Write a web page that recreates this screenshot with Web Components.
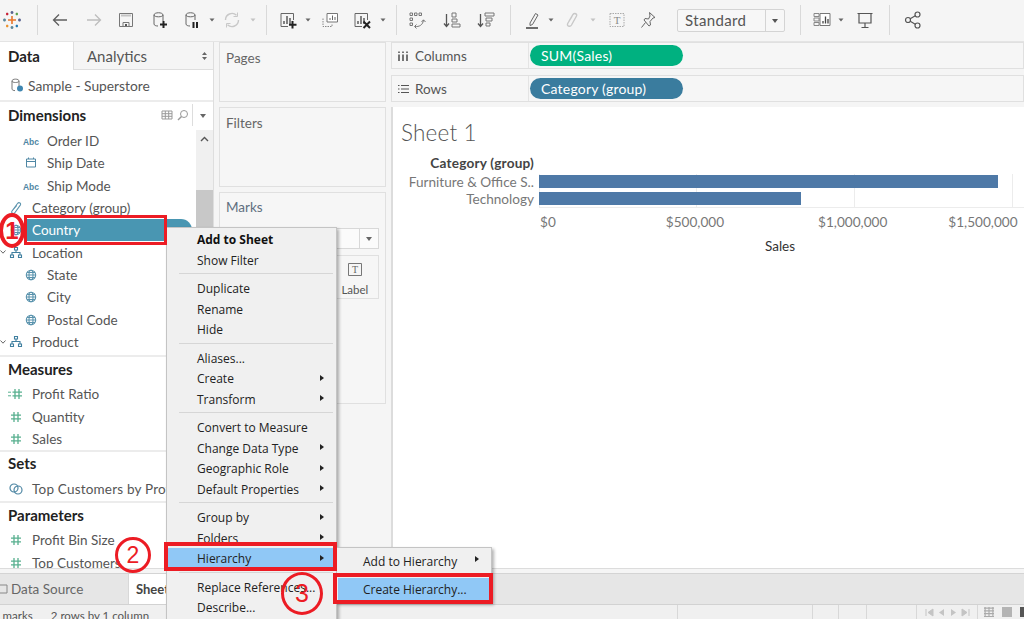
<!DOCTYPE html>
<html>
<head>
<meta charset="utf-8">
<title>Tableau</title>
<style>
  html, body { margin: 0; padding: 0; background: #fff; }
</style>
</head>
<body>
<tableau-app></tableau-app>
<script>
const ICONS = {
  logo: `<g stroke-width="1.6" fill="none">
    <path d="M10 6v8M6 10h8" stroke="#e8762b"/><path d="M10 1v3M8.6 2.5h2.8" stroke="#5b6591"/>
    <path d="M10 16v3M8.6 17.5h2.8" stroke="#5b879b"/><path d="M1 10h3M2.5 8.6v2.8" stroke="#59879b"/>
    <path d="M16 10h3M17.5 8.6v2.8" stroke="#5b6591"/><path d="M4 4h2.4M5.2 2.8v2.4" stroke="#c72035"/>
    <path d="M13.6 4H16M14.8 2.8v2.4" stroke="#59a14f"/><path d="M4 16h2.4M5.2 14.8v2.4" stroke="#eb912b"/>
    <path d="M13.6 16H16M14.8 14.8v2.4" stroke="#1f77b4"/></g>`,
  back: `<path d="M17 10H3.5M9 4.5 3.5 10 9 15.5" fill="none" stroke="#5f5f5f" stroke-width="1.3"/>`,
  forward: `<path d="M3 10h13.5M11 4.5l5.5 5.5-5.5 5.5" fill="none" stroke="#bdbdbd" stroke-width="1.3"/>`,
  save: `<path d="M3.5 3.5h13v13h-13z" fill="none" stroke="#777"/><path d="M5 5.5h10" stroke="#c4c4c4" stroke-width="2"/><path d="M7 16v-3.5h6V16" fill="none" stroke="#777"/><path d="M9 14h2v2H9z" fill="#555"/>`,
  dbadd: `<path d="M5 5c0-3 9-3 9 0v6M5 5c0 2.4 9 2.4 9 0M5 5v9c0 1.400 2 2 4 2" fill="none" stroke="#666"/><path d="M14.500 11v7M11 14.500h7" stroke="#222" stroke-width="2"/>`,
  dbpause: `<path d="M4 5c0-3 9-3 9 0v5M4 5c0 2.400 9 2.400 9 0M4 5v9c0 1.400 2 2 4 2" fill="none" stroke="#666"/><path d="M11.500 12v6M15 12v6" stroke="#222" stroke-width="2"/>`,
  refresh: `<path d="M3.500 10a6.500 6.500 0 0 1 11-4.700M16.500 10a6.500 6.500 0 0 1-11 4.700" fill="none" stroke="#c8c8c8" stroke-width="1.400"/><path d="M15.500 2.500v4h-4M4.500 17.500v-4h4" fill="none" stroke="#c8c8c8"/>`,
  sheetadd: `<path d="M3 16.500V3.500h12.500V10M3 16.500h7" fill="none" stroke="#666"/><path d="M6 14v-3M9 14V6M12 14V8" stroke="#444" stroke-width="1.300"/><path d="M14.500 11v7.500M11 14.700h7.500" stroke="#222" stroke-width="2"/>`,
  sheetdup: `<path d="M7 12V3.500h10.500V12H7z" fill="#fff" stroke="#777"/><path d="M10 10V8M12.500 10V5.500M15 10V7" stroke="#666"/><path d="M3 8.500V16.500h9v-2.500" fill="none" stroke="#888" stroke-dasharray="1.500 1"/>`,
  sheetclear: `<path d="M3 16.500V3.500h12.500V10M3 16.500h7" fill="none" stroke="#666"/><path d="M6 14v-3M9 14V6M12 14V8" stroke="#444" stroke-width="1.300"/><path d="M11.500 11.500l6.500 6.500M18 11.500 11.500 18" stroke="#222" stroke-width="2"/>`,
  swap: `<g fill="none" stroke="#777"><path d="M3 3h2.500v2.500H3zM7.500 3H10v2.500H7.500zM12 3h2.500v2.500H12zM3 8h2.500v2.500H3zM3 13h2.500v2.500H3z"/><path d="M8 16.500c4 .5 8-1.500 8.500-6.500"/><path d="M14.500 12l2-2.200 2 2.200M9.500 14.500 7.500 16.500l2 2"/></g>`,
  sortasc: `<path d="M4.500 4v12M2 13.500l2.500 3 2.500-3" fill="none" stroke="#555" stroke-width="1.300"/><path d="M10 3h4v4h-4zM10 9h5v3h-5zM10 14h8v3h-8z" fill="none" stroke="#777"/>`,
  sortdesc: `<path d="M4.500 4v12M2 13.500l2.500 3 2.500-3" fill="none" stroke="#555" stroke-width="1.300"/><path d="M9 3h9v3H9zM10 8h6v3h-6zM10 13h4v3h-4z" fill="none" stroke="#777"/>`,
  highlight: `<path d="M7 13 12.500 3.500l2.500 1.500L9.500 14.500 7 15.500z" fill="none" stroke="#666"/><path d="M3 18h12" stroke="#333" stroke-width="1.400"/>`,
  clip: `<path d="M6.500 12 11 4.500c1.500-2 4.500-.5 3.500 1.500L9.500 15c-1.500 2.500-5 1-3.800-1.500L10 6.500" fill="none" stroke="#c8c8c8" stroke-width="1.400"/>`,
  textbox: `<path d="M3 3.500h14v13H3z" fill="none" stroke="#aaa" stroke-dasharray="1.500 1"/><text x="10" y="14" text-anchor="middle" font-family="Liberation Serif, serif" font-size="11" fill="#888">T</text>`,
  pin: `<path d="M11.500 2.500l5.500 5-2 .5-3 3.500.5 3.500-1.500 1L6 10l1-1.500 3.500.5L12 6z" fill="none" stroke="#666"/><path d="M7.500 12.500 3.500 17.500" stroke="#666"/>`,
  showme: `<path d="M2 3.500h5v3H2zM2 8h5v3H2zM2 12.500h5v3H2z" fill="none" stroke="#888"/><path d="M8 3.500h10v12H8z" fill="#fff" stroke="#777"/><path d="M11 13.500v-2.500M13.500 13.500V6.500M16 13.500V9" stroke="#444" stroke-width="1.300"/>`,
  present: `<path d="M2.500 3.500h15M4 3.500v9.500h12V3.500M10 13v4M6.500 17.500h7" fill="none" stroke="#555" stroke-width="1.200"/>`,
  share: `<g fill="none" stroke="#555" stroke-width="1.200"><circle cx="5" cy="10" r="2.500"/><circle cx="14.500" cy="4.500" r="2.500"/><circle cx="14.500" cy="15.500" r="2.500"/><path d="M7.200 8.800 12.300 5.800M7.200 11.200l5.100 3"/></g>`,
  caret: `<path d="M7.500 8.500h5L10 11.500z" fill="#666"/>`,
  caretoff: `<path d="M7.500 8.500h5L10 11.500z" fill="#c4c4c4"/>`
};

const FIELD_ICONS = {
  abc: `<text x="9" y="12.500" text-anchor="middle" font-family="Liberation Sans, sans-serif" font-size="8.500" font-weight="700" fill="#4f87a4">Abc</text>`,
  date: `<path d="M4.500 5h9v8h-9zM4.500 7.500h9M6.500 3.500V5M11.500 3.500V5" fill="none" stroke="#4f87a4"/>`,
  globe: `<g fill="none" stroke="#5a93ad" stroke-width="1.100"><circle cx="9" cy="9" r="4.700"/><ellipse cx="9" cy="9" rx="2" ry="4.700"/><path d="M4.300 9h9.400M5 6.500h8M5 11.500h8"/></g>`,
  tree: `<g fill="none" stroke="#3f7f9f" stroke-width="1.100"><path d="M7.500 3.500h3v2.500h-3zM3.500 11h3v2.500h-3zM11.500 11h3v2.500h-3zM9 6v2.500M5 11V8.500h8V11"/></g>`,
  clip: `<path d="M5 12 10.500 4.500c1.500-1.800 4-.2 2.800 1.600L8 13.500c-1.400 1.900-4.300.6-3-1.500L9.800 6.500" fill="none" stroke="#5a93ad" stroke-width="1.100"/>`,
  num: `<path d="M7 4v10M11 4v10M4 7.200h10M4 10.800h10" fill="none" stroke="#58b08f" stroke-width="1.300"/>`,
  calc: `<path d="M8 4v10M12 4v10M5.500 7.200h9.500M5.500 10.800h9.500" fill="none" stroke="#58b08f" stroke-width="1.300"/><path d="M1 7.200h3M1 10.800h3" stroke="#58b08f"/>`,
  set: `<g fill="none" stroke="#4f87a4" stroke-width="1.200"><circle cx="7" cy="8" r="4"/><circle cx="11" cy="10" r="4"/></g>`
};

// small helper: one class per element, template string in the class
function define(name, css, html) {
  class El extends HTMLElement {
    connectedCallback() {
      if (this.shadowRoot) return;
      const root = this.attachShadow({ mode: 'open' });
      root.innerHTML = `<style>${css}</style>${typeof html === 'function' ? html(this) : html}`;
    }
  }
  customElements.define(name, El);
}

define('tool-icon', `
  :host { display: flex; align-items: center; justify-content: center; height: 40px; flex: none; }
  svg { width: 20px; height: 20px; display: block; overflow: visible; }
`, el => `<svg viewBox="0 0 20 20">${ICONS[el.getAttribute('name')]}</svg>`);

define('tool-sep', `
  :host { display: block; width: 1px; height: 30px; background: #d9d9d9; flex: none; }
`, '');

define('view-select', `
  :host { display: flex; flex: none; width: 108px; height: 23px; box-sizing: border-box; border: 1px solid #d4d4d4; border-radius: 2px; background: #f7f7f7; align-items: center; font: 15px Lato, sans-serif; color: #555; letter-spacing: .35px; }
  span { flex: 1; padding-left: 7px; }
  i { width: 18px; height: 100%; border-left: 1px solid #d4d4d4; display: flex; align-items: center; justify-content: center; }
  i::after { content: ""; border: 3px solid transparent; border-top: 4px solid #555; margin-top: 4px; }
`, `<span><slot></slot></span><i></i>`);

define('tool-bar', `
  :host { display: flex; align-items: center; height: 42px; flex: none; background: #f5f5f5; border-bottom: 1px solid #e4e4e4; box-sizing: border-box; overflow: hidden; padding-bottom: 1px; }
`, `
  <tool-icon name="logo" style="width:24px"></tool-icon>
  <tool-sep style="margin-left:13px"></tool-sep>
  <tool-icon name="back" style="width:34px;margin-left:5px"></tool-icon>
  <tool-icon name="forward" style="width:34px"></tool-icon>
  <tool-icon name="save" style="width:30px"></tool-icon>
  <tool-icon name="dbadd" style="width:36px"></tool-icon>
  <tool-icon name="dbpause" style="width:30px"></tool-icon>
  <tool-icon name="caret" style="width:10px"></tool-icon>
  <tool-icon name="refresh" style="width:30px"></tool-icon>
  <tool-icon name="caretoff" style="width:12px"></tool-icon>
  <tool-sep style="margin-left:7px"></tool-sep>
  <tool-icon name="sheetadd" style="width:30px;margin-left:6px"></tool-icon>
  <tool-icon name="caret" style="width:10px"></tool-icon>
  <tool-icon name="sheetdup" style="width:34px"></tool-icon>
  <tool-icon name="sheetclear" style="width:30px"></tool-icon>
  <tool-icon name="caret" style="width:12px"></tool-icon>
  <tool-sep style="margin-left:7px"></tool-sep>
  <tool-icon name="swap" style="width:40px"></tool-icon>
  <tool-icon name="sortasc" style="width:30px"></tool-icon>
  <tool-icon name="sortdesc" style="width:38px"></tool-icon>
  <tool-sep style="margin-left:5px"></tool-sep>
  <tool-icon name="highlight" style="width:26px;margin-left:9px"></tool-icon>
  <tool-icon name="caret" style="width:10px"></tool-icon>
  <tool-icon name="clip" style="width:32px"></tool-icon>
  <tool-icon name="caretoff" style="width:10px"></tool-icon>
  <tool-icon name="textbox" style="width:38px"></tool-icon>
  <tool-icon name="pin" style="width:24px"></tool-icon>
  <view-select style="margin-left:17px">Standard</view-select>
  <tool-sep style="margin-left:15px"></tool-sep>
  <tool-icon name="showme" style="width:28px;margin-left:7px"></tool-icon>
  <tool-icon name="caret" style="width:10px"></tool-icon>
  <tool-icon name="present" style="width:38px"></tool-icon>
  <tool-sep style="margin-left:5px"></tool-sep>
  <tool-icon name="share" style="width:46px"></tool-icon>
`);

define('field-row', `
  :host { display: flex; align-items: center; height: 22.3px; font: 13.500px Lato, sans-serif; color: #555; white-space: nowrap; position: relative; flex: none; }
  .ic { width: 18px; height: 18px; flex: none; overflow: visible; }
  .chev { position: absolute; left: 0; top: 9px; width: 6px; height: 4px; fill: none; stroke: #666; }
  :host([level="1"]) { padding-left: 22px; }
  :host([level="0"]) { padding-left: 7px; }
  .lb { margin-left: 7px; }
  :host([selected]) .lb { background: #4996b2; color: #fff; border-radius: 0 11px 11px 0; height: 22px; line-height: 22px; margin-left: -1px; padding-left: 8px; width: 160px; }
`, el => `
  ${el.hasAttribute('open') ? '<svg class="chev" viewBox="0 0 6 4"><path d="M.5.5 3 3.200 5.500.5"/></svg>' : ''}
  <svg class="ic" viewBox="0 0 18 18">${FIELD_ICONS[el.getAttribute('icon')]}</svg>
  <span class="lb"><slot></slot></span>`);

define('pane-section', `
  :host { display: flex; flex-direction: column; border-bottom: 2px solid #ececec; box-sizing: border-box; flex: none; }
  h3 { margin: 0; height: var(--head, 26px); padding-left: 8px; font: 700 15px/calc(var(--head, 26px) - 2px) Lato, sans-serif; color: #222; }
`, el => `<h3>${el.getAttribute('title')}</h3><slot></slot>`);

define('data-pane', `
  :host { display: flex; flex-direction: column; width: 214px; flex: none; background: #fff; border-right: 1px solid #dedede; box-sizing: border-box; overflow: hidden; font-family: Lato, sans-serif; }
  .tabs { display: flex; height: 28px; flex: none; }
  .tabs b { width: 73px; padding-left: 8px; box-sizing: border-box; font: 700 15px/28px Lato, sans-serif; color: #222; }
  .tabs div { flex: 1; background: #f5f5f5; border-left: 1px solid #dedede; border-bottom: 1px solid #dedede; font: 15px/28px Lato, sans-serif; color: #555; padding-left: 13px; display: flex; justify-content: space-between; padding-right: 6px; }
  .tabs svg { width: 5px; height: 8px; align-self: center; }
  .src { height: 32px; flex: none; display: flex; align-items: center; border-bottom: 2px solid #ececec; box-sizing: border-box; font: 13.800px Lato, sans-serif; color: #555; padding-left: 10px; gap: 4px; }
  .src svg { width: 14px; height: 16px; }
  .dimhead { display: flex; align-items: center; height: 28px; padding-bottom: 2px; box-sizing: border-box; flex: none; font: 700 15px Lato, sans-serif; color: #222; padding-left: 8px; }
  .dimhead span { flex: 1; }
  .dimhead svg { width: 14px; height: 14px; margin-right: 2px; }
  .dimhead .drop { width: 20px; height: 22px; border-left: 1px solid #ddd; margin: 0 0 0 2px; display: flex; align-items: center; justify-content: center; }
  .dimhead .drop::after { content: ""; border: 3px solid transparent; border-top: 4px solid #666; margin-top: 4px; }
  .scrollwrap { flex: 1; display: flex; min-height: 0; }
  .list { width: 196px; flex: none; overflow: hidden; }
  .bar { width: 17px; flex: none; background: #f0f0f0; display: flex; flex-direction: column; }
  .bar .up { height: 60px; display: flex; justify-content: center; padding-top: 6px; box-sizing: border-box; }
  .bar .up svg { width: 9px; height: 6px; }
  .bar .thumb { height: 300px; background: #c8c8c8; }
  .dims { padding-bottom: 2px; border-bottom: 2px solid #ececec; }
  pane-section field-row { height: 22.500px; }
`, `
  <div class="tabs"><b>Data</b><div>Analytics<svg viewBox="0 0 5 8"><path d="M2.500 0 5 3H0zM0 5h5L2.500 8z" fill="#666"/></svg></div></div>
  <div class="src">
    <svg viewBox="0 0 14 16"><path d="M2 4c0-2.500 7-2.500 7 0v5M2 4c0 2 7 2 7 0M2 4v8c0 1 1.500 1.600 3 1.600" fill="none" stroke="#777"/><circle cx="10" cy="11.500" r="3" fill="#3f86b0"/></svg>
    <span>Sample - Superstore</span>
  </div>
  <div class="dimhead"><span>Dimensions</span>
    <svg viewBox="0 0 14 14"><path d="M2 3h10v8H2zM2 5.700h10M2 8.300h10M5.300 3v8M8.700 3v8" fill="none" stroke="#999"/></svg>
    <svg viewBox="0 0 14 14" style="margin:0"><circle cx="8" cy="6" r="3.500" fill="none" stroke="#999"/><path d="M5.500 8.500 2 12" stroke="#999" stroke-width="1.400"/></svg>
    <div class="drop"></div>
  </div>
  <div class="scrollwrap">
    <div class="list">
      <div class="dims">
        <field-row level="1" icon="abc">Order ID</field-row>
        <field-row level="1" icon="date">Ship Date</field-row>
        <field-row level="1" icon="abc">Ship Mode</field-row>
        <field-row level="0" icon="clip">Category (group)</field-row>
        <field-row level="0" icon="globe" selected>Country</field-row>
        <field-row level="0" icon="tree" open>Location</field-row>
        <field-row level="1" icon="globe">State</field-row>
        <field-row level="1" icon="globe">City</field-row>
        <field-row level="1" icon="globe">Postal Code</field-row>
        <field-row level="0" icon="tree" open>Product</field-row>
      </div>
      <pane-section title="Measures">
        <field-row level="0" icon="calc">Profit Ratio</field-row>
        <field-row level="0" icon="num">Quantity</field-row>
        <field-row level="0" icon="num">Sales</field-row>
      </pane-section>
      <pane-section title="Sets" style="--head:25px;padding-bottom:1px">
        <field-row level="0" icon="set" style="letter-spacing:.2px">Top Customers by Profit</field-row>
      </pane-section>
      <pane-section title="Parameters">
        <field-row level="0" icon="num">Profit Bin Size</field-row>
        <field-row level="0" icon="num">Top Customers</field-row>
      </pane-section>
    </div>
    <div class="bar"><div class="up"><svg viewBox="0 0 9 6"><path d="M1 5l3.500-3.500L8 5" fill="none" stroke="#555" stroke-width="1.400"/></svg></div><div class="thumb"></div></div>
  </div>
`);

define('shelf-card', `
  :host { display: block; box-sizing: border-box; background: #f6f6f6; border: 1px solid #e0e0e0; font: 13.500px Lato, sans-serif; color: #666; padding: 7px 6px; flex: none; }
`, `<slot></slot>`);

define('marks-card', `
  :host { display: block; box-sizing: border-box; background: #f6f6f6; border: 1px solid #e0e0e0; font: 13.500px/16px Lato, sans-serif; color: #5f6f7f; padding: 6px 6px; flex: none; height: 212px; }
  .sel { height: 21px; box-sizing: border-box; margin: 13px 0 0; border: 1px solid #d8d8d8; background: #fbfbfb; display: flex; justify-content: flex-end; }
  .sel i { width: 18px; border-left: 1px solid #d8d8d8; display: flex; align-items: center; justify-content: center; }
  .sel i::after { content: ""; border: 3px solid transparent; border-top: 4px solid #666; margin-top: 4px; }
  .btns { display: grid; grid-template-columns: repeat(3, 1fr); height: 44px; box-sizing: border-box; margin-top: 6px; border: 1px solid #e0e0e0; }
  .btns div { display: flex; flex-direction: column; align-items: center; justify-content: flex-end; font-size: 11.500px; line-height: 14px; color: #555; padding-bottom: 1px; gap: 6px; }
  .btns div:last-child { padding-left: 4px; }
  svg { width: 16px; height: 15px; }
`, `<div>Marks</div><div class="sel"><i></i></div>
  <div class="btns"><div></div><div></div><div><svg viewBox="0 0 16 15"><path d="M1.500 1.500h13v12h-13z" fill="none" stroke="#777"/><text x="8" y="11" text-anchor="middle" font-family="Liberation Serif, serif" font-size="10" fill="#666">T</text></svg>Label</div></div>`);

define('shelf-row', `
  :host { display: flex; box-sizing: border-box; height: 27px; background: #f6f6f6; border: 1px solid #e0e0e0; align-items: center; font: 13.500px Lato, sans-serif; color: #555; flex: none; }
  .name { width: 137px; height: 100%; display: flex; align-items: center; gap: 6px; padding-left: 5px; box-sizing: border-box; border-right: 1px solid #e4e4e4; }
  .name svg { width: 12px; height: 12px; flex: none; }
  .pill { width: 153px; height: 21px; border-radius: 11px; margin-left: 1px; color: #fff; font-size: 14px; letter-spacing: .2px; line-height: 21px; padding-left: 11px; box-sizing: border-box; }
  :host([kind="green"]) .pill { background: #00b180; }
  :host([kind="blue"]) .pill { background: #3a7c9e; }
`, el => `<div class="name">${el.getAttribute('kind') === 'green'
    ? '<svg viewBox="0 0 12 12"><path d="M2 1.500v1.400M6 1.500v1.400M10 1.500v1.400M2 4.500v6.500M6 4.500v6.500M10 4.500v6.500" stroke="#555" stroke-width="1.600"/></svg>'
    : '<svg viewBox="0 0 12 12"><path d="M1 2.500h1.500M1 6h1.500M1 9.500h1.500M4 2.500h8M4 6h8M4 9.500h8" stroke="#555" stroke-width="1.200"/></svg>'}${el.getAttribute('label')}</div><div class="pill"><slot></slot></div>`);

define('bar-chart', `
  :host { display: block; font: 13.600px Lato, sans-serif; color: #777; }
  .grid { display: grid; grid-template-columns: 138px 1fr; }
  .h { text-align: right; font: 700 13.600px/22px Lato, sans-serif; letter-spacing: .2px; color: #444; padding-right: 5px; height: 22px; margin-top: 5px; }
  .cat { text-align: right; padding-right: 5px; height: 17px; line-height: 16px; white-space: nowrap; overflow: hidden; }
  .plot { grid-column: 2; grid-row: 2 / span 2; border-bottom: 1px solid #ececec; height: 34px; background-image: linear-gradient(#ececec,#ececec), linear-gradient(#ececec,#ececec), linear-gradient(#ececec,#ececec), linear-gradient(#ececec,#ececec); background-size: 1px 100%; background-repeat: no-repeat; background-position: 0 0, 157px 0, 315px 0, 473px 0; display: flex; flex-direction: column; gap: 4px; padding-top: 1px; box-sizing: border-box; }
  .plot div { height: 13px; background: #4e79a7; }
  .axis { display: flex; margin-left: 138px; height: 24px; align-items: center; white-space: nowrap; margin-top: 2px; }
  .title { text-align: center; margin: 4px 0 0 138px; width: 482px; font: 13.500px Lato, sans-serif; color: #333; }
`, `
  <div class="grid">
    <div class="h" style="grid-column:1">Category (group)</div><div></div>
    <div class="cat" style="grid-column:1">Furniture &amp; Office S..</div>
    <div class="plot"><div style="width:459px"></div><div style="width:262px"></div></div>
    <div class="cat" style="grid-column:1">Technology</div>
  </div>
  <div class="axis">
    <span style="margin-left:1px">$0</span>
    <span style="margin-left:110px">$500,000</span>
    <span style="margin-left:94px">$1,000,000</span>
    <span style="margin-left:61px">$1,500,000</span>
  </div>
  <div class="title">Sales</div>
`);

define('viz-view', `
  :host { display: block; flex: 1; background: #fff; border-left: 2px solid #dcdcdc; padding: 12px 0 0 8px; min-height: 0; box-sizing: border-box; }
  h1 { margin: 0; font: 300 22.500px/28px Lato, sans-serif; color: #555; letter-spacing: .2px; }
`, `<h1>Sheet 1</h1><bar-chart></bar-chart>`);

define('bottom-tabs', `
  :host { display: block; flex: none; font: 13px Lato, sans-serif; color: #777; }
  .gap { height: 6px; background: #f5f5f5; border-top: 1px solid #dcdcdc; border-bottom: 1px solid #d4d4d4; box-sizing: border-box; }
  .tabs { display: flex; height: 31px; background: #e6e6e6; border-bottom: 1px solid #d2d2d2; box-sizing: border-box; }
  .ds { width: 129px; display: flex; align-items: center; padding-left: 11px; box-sizing: border-box; font-size: 13.500px; color: #666; border-right: 1px solid #d8d8d8; }
  .sh { padding: 0 30px 0 7px; background: #fff; font: 700 13px/31px Lato, sans-serif; color: #444; width: 100px; box-sizing: border-box; }
  .ds svg { position: relative; margin-left: -15px; width: 12px; height: 12px; margin-right: 3px; }
  .status { display: flex; height: 14px; background: #f0f0f0; font: 11.500px/22px Lato, sans-serif; color: #555; overflow: hidden; }
  .status span { white-space: nowrap; }
  .cell { border-left: 1px solid #d8d8d8; height: 14px; flex: none; box-sizing: border-box; display: flex; align-items: center; justify-content: space-around; padding: 0 6px; }
  .cell svg { width: 9px; height: 9px; }
`, `
  <div class="gap"></div>
  <div class="tabs">
    <div class="ds"><svg viewBox="0 0 12 12"><path d="M1 2h10v8H1z" fill="none" stroke="#888"/></svg>Data Source</div>
    <div class="sh">Sheet 1</div>
  </div>
  <div class="status">
    <div style="flex:none;width:677px;display:flex">
      <span style="margin-left:-7px">2 marks</span>
      <span style="margin-left:18px">2 rows by 1 column</span>
    </div>
    <div class="cell" style="width:135px"></div>
    <div class="cell" style="width:26px"></div>
    <div class="cell" style="width:28px"></div>
    <div class="cell" style="width:50px"></div>
    <div class="cell" style="width:61px">
      <svg viewBox="0 0 9 9"><path d="M1 1v7M8 1 3 4.500 8 8z" fill="#c4c4c4" stroke="#c4c4c4"/></svg>
      <svg viewBox="0 0 9 9"><path d="M7 1 2 4.500 7 8z" fill="#c4c4c4"/></svg>
      <svg viewBox="0 0 9 9"><path d="M2 1l5 3.500L2 8z" fill="#c4c4c4"/></svg>
      <svg viewBox="0 0 9 9"><path d="M8 1v7M1 1l5 3.500L1 8z" fill="#c4c4c4" stroke="#c4c4c4"/></svg>
    </div>
    <div class="cell" style="width:47px;justify-content:flex-start;gap:8px;padding-left:6px">
      <svg viewBox="0 0 9 9" style="flex:none;width:10px;height:10px"><path d="M0 1h9M0 3.500h9M0 6h9M0 8.500h9M1 0v9M4.500 0v9M8 0v9" stroke="#aaa"/></svg>
      <svg viewBox="0 0 9 9" style="flex:none;width:10px;height:10px"><path d="M0 0h9v9H0z" fill="#b4b4b4"/></svg>
      <svg viewBox="0 0 9 9" style="flex:none;width:10px;height:10px"><path d="M0 0h9v9H0z" fill="#555"/></svg>
    </div>
  </div>
`);

define('menu-item', `
  :host { display: flex; align-items: center; height: 20.500px; padding-left: 29px; font: 12px "Open Sans", sans-serif; color: #222; position: relative; white-space: nowrap; flex: none; }
  :host([bold]) { font-weight: 700; color: #111; }
  :host([active]) { background: #90c8f6; }
  :host([arrow])::after { content: ""; position: absolute; right: 11px; top: 6.500px; border: 3.500px solid transparent; border-left: 4px solid #222; border-right: 0; }
`, `<slot></slot>`);

define('menu-sep', `
  :host { display: block; height: 1px; margin: 3px 2px 4px 11px; background: #d6d6d6; flex: none; }
`, '');

define('pop-menu', `
  :host { display: block; position: absolute; background: #f0f0f0; border: 1px solid #c4c4c4; box-shadow: 2px 2px 3px rgba(0,0,0,.3); box-sizing: border-box; padding: 1.300px 1px 1px; z-index: 5; }
`, `<slot></slot>`);

// red boxes and circles drawn on top of the screenshot
define('red-mark', `
  :host { display: flex; align-items: center; justify-content: center; position: absolute; box-sizing: border-box; border: 3px solid #ec1c24; color: #ec1c24; font: 400 24px/1 "Liberation Sans", sans-serif; z-index: 9; }
  :host([round]) { border-radius: 50%; }
`, `<slot></slot>`);

define('tableau-app', `
  :host { display: flex; flex-direction: column; position: relative; width: 1024px; height: 619px; overflow: hidden; background: #f5f5f5; }
  .main { flex: 1; display: flex; min-height: 0; gap: 5px; }
  .shelves { width: 167px; flex: none; display: flex; flex-direction: column; gap: 5px; }
  .right { flex: 1; display: flex; flex-direction: column; gap: 5px; min-width: 0; }
  .rows { display: flex; flex-direction: column; gap: 6px; }
`, `
  <tool-bar></tool-bar>
  <div class="main">
    <data-pane></data-pane>
    <div class="shelves">
      <shelf-card style="height:60px">Pages</shelf-card>
      <shelf-card style="height:80px">Filters</shelf-card>
      <marks-card></marks-card>
    </div>
    <div class="right">
      <div class="rows">
        <shelf-row label="Columns" kind="green">SUM(Sales)</shelf-row>
        <shelf-row label="Rows" kind="blue">Category (group)</shelf-row>
      </div>
      <viz-view></viz-view>
    </div>
  </div>
  <bottom-tabs></bottom-tabs>

  <pop-menu style="left:166px;top:227px;width:171px;height:400px">
    <menu-item bold>Add to Sheet</menu-item>
    <menu-item>Show Filter</menu-item>
    <menu-sep></menu-sep>
    <menu-item>Duplicate</menu-item>
    <menu-item>Rename</menu-item>
    <menu-item>Hide</menu-item>
    <menu-sep></menu-sep>
    <menu-item>Aliases...</menu-item>
    <menu-item arrow>Create</menu-item>
    <menu-item arrow>Transform</menu-item>
    <menu-sep></menu-sep>
    <menu-item>Convert to Measure</menu-item>
    <menu-item arrow>Change Data Type</menu-item>
    <menu-item arrow>Geographic Role</menu-item>
    <menu-item arrow>Default Properties</menu-item>
    <menu-sep></menu-sep>
    <menu-item arrow>Group by</menu-item>
    <menu-item arrow>Folders</menu-item>
    <menu-item arrow active>Hierarchy</menu-item>
    <menu-sep></menu-sep>
    <menu-item>Replace References...</menu-item>
    <menu-item>Describe...</menu-item>
  </pop-menu>
  <pop-menu style="left:336px;top:547px;width:156px;height:56px">
    <menu-item arrow style="padding-left:25px;height:24px">Add to Hierarchy</menu-item>
    <menu-sep style="margin:2px 0"></menu-sep>
    <menu-item active style="padding-left:25px;height:23px">Create Hierarchy...</menu-item>
  </pop-menu>

  <red-mark style="left:24px;top:215px;width:143px;height:30px"></red-mark>
  <red-mark round style="left:-1px;top:213px;width:26px;height:35px;font-weight:700;border-width:4px">1</red-mark>
  <red-mark style="left:164px;top:542px;width:173px;height:29px;border-width:4px"></red-mark>
  <red-mark round style="left:115px;top:537px;width:36px;height:36px;border-width:3.500px;font-size:23px">2</red-mark>
  <red-mark style="left:333px;top:573px;width:160px;height:31px;border-width:4px"></red-mark>
  <red-mark round style="left:281px;top:572px;width:42px;height:43px;font-size:25px">3</red-mark>
`);
</script>
</body>
</html>
